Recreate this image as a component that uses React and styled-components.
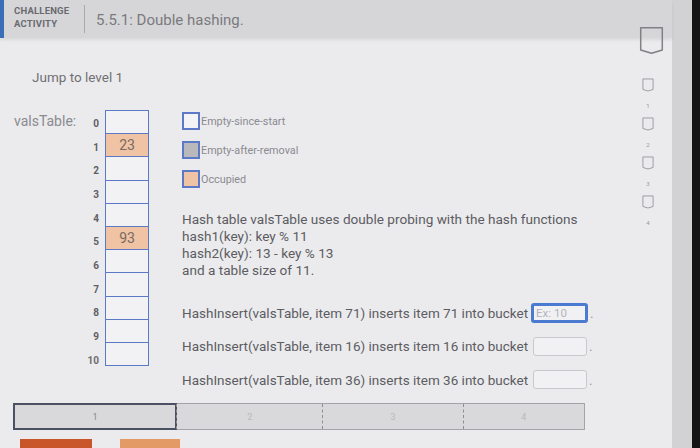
import React from 'react';
import styled, { createGlobalStyle } from 'styled-components';

const Global = createGlobalStyle`
  html, body {
    margin: 0;
    padding: 0;
    width: 700px;
    height: 448px;
    overflow: hidden;
    background: #e9e9ea;
    font-family: Roboto, "Liberation Sans", sans-serif;
  }
`;

const Screen = styled.div`
  display: flex;
  width: 700px;
  height: 448px;
  overflow: hidden;
`;

const Main = styled.div`
  flex: 1;
  display: flex;
  flex-direction: column;
  background: #ebebed;
`;

const EdgeStrip = styled.div`
  width: 20px;
  background: #d2d2d4;
`;

const Bezel = styled.div`
  width: 8px;
  background: #141414;
`;

const Header = styled.div`
  height: 38px;
  flex-shrink: 0;
  display: flex;
  align-items: flex-start;
  background: #d6d6d8;
  border-left: 4px solid #3a6fb8;
  box-shadow: 0 2px 3px rgba(0, 0, 0, 0.08);
  position: relative;
  z-index: 1;
`;

const Badge = styled.div`
  padding: 4px 0 0 10px;
  width: 70px;
  font-size: 9.5px;
  font-weight: 700;
  line-height: 13px;
  color: #6a6a70;
  letter-spacing: 0.2px;
`;

const Divider = styled.div`
  width: 1px;
  height: 28px;
  margin-top: 5px;
  background: #a9a9ad;
`;

const Title = styled.div`
  margin: 11px 0 0 11px;
  font-size: 15px;
  color: #7a7a7e;
`;

const BigShieldWrap = styled.div`
  margin: 24px 0 0 auto;
  padding-right: 6px;
  width: 28px;
  height: 34px;
`;

const Body = styled.div`
  flex: 1;
  display: flex;
`;

const Content = styled.div`
  flex: 1;
  display: flex;
  flex-direction: column;
  padding-left: 14px;
`;

const LevelColumn = styled.div`
  width: 48px;
  display: flex;
  flex-direction: column;
  align-items: center;
  padding-top: 40px;
  gap: 7px;
`;

const LevelItem = styled.div`
  display: flex;
  flex-direction: column;
  align-items: center;
  height: 32px;
  color: #9a9a9e;
  font-size: 6px;
  line-height: 8px;

  span {
    margin-top: 10px;
  }
`;

const JumpLink = styled.div`
  margin: 31px 0 0 18px;
  font-size: 13.5px;
  line-height: 16px;
  color: #707074;
`;

const Workspace = styled.div`
  display: flex;
  margin-top: 25px;
`;

const TableBlock = styled.div`
  display: flex;
  width: 168px;
  flex-shrink: 0;
`;

const TableName = styled.div`
  width: 72px;
  padding-top: 3px;
  font-size: 14px;
  color: #8a8a90;
`;

const IndexCol = styled.div`
  width: 19px;
  padding-top: 1.5px;
`;

const IndexLabel = styled.div`
  height: 23.7px;
  display: flex;
  align-items: center;
  justify-content: flex-end;
  padding-right: 6px;
  font-size: 10px;
  font-weight: 700;
  color: ${p => (p.$wide ? '#6c6c70' : '#5f5f64')};
`;

const CellCol = styled.div`
  width: 44px;
  border-bottom: 1.5px solid #5b79c6;
  align-self: flex-start;
`;

const Cell = styled.div`
  height: 22.2px;
  border: 1.5px solid #5b79c6;
  border-bottom: none;
  background: ${p => (p.$filled ? '#efc3a3' : '#f2f2f4')};
  display: flex;
  align-items: center;
  justify-content: center;
  font-size: 14px;
  color: #7a6a62;
`;

const Info = styled.div`
  display: flex;
  flex-direction: column;
`;

const Legend = styled.div`
  display: flex;
  flex-direction: column;
  gap: 11px;
  margin-top: 2px;
`;

const LegendRow = styled.div`
  display: flex;
  align-items: center;
  gap: 1px;
  height: 18px;
  font-size: 10.8px;
  color: #8a8a90;
`;

const Swatch = styled.div`
  width: 14px;
  height: 14px;
  border: 2px solid #5b79c6;
  background: ${p => p.$bg};
`;

const Description = styled.div`
  margin-top: 23px;
  font-size: 13.6px;
  line-height: 17px;
  color: #5c5c62;
`;

const Inserts = styled.div`
  display: flex;
  flex-direction: column;
  gap: 12.5px;
  margin-top: 23px;
`;

const InsertRow = styled.div`
  display: flex;
  align-items: center;
  height: 21px;
  font-size: 13.5px;
  color: #5c5c62;
  white-space: nowrap;
`;

const Answer = styled.div`
  margin-left: ${p => (p.$focused ? '3px' : '5px')};
  width: ${p => (p.$focused ? '49px' : '50px')};
  height: ${p => (p.$focused ? '14px' : '17px')};
  border: ${p => (p.$focused ? '3px solid #4a7bd0' : '1px solid #c9c9cd')};
  border-radius: 3px;
  background: #f1f1f3;
  font-size: 11.5px;
  color: #b0b4c0;
  display: flex;
  align-items: center;
  padding-left: 2px;
  box-sizing: content-box;
`;

const Period = styled.span`
  margin-left: 2px;
  color: #9a9a9e;
`;

const Progress = styled.div`
  display: flex;
  flex-shrink: 0;
  width: 570px;
  height: 25px;
  margin: 13px 0 0 -1px;
  border: 1px solid #a4a4a8;
  background: #d9d9db;
`;

const Segment = styled.div`
  width: ${p => p.$w}px;
  display: flex;
  align-items: center;
  justify-content: center;
  font-size: 9px;
  color: ${p => (p.$active ? '#88888c' : '#b8b8bc')};
  border-left: ${p => (p.$first ? 'none' : '1px dashed #8e8e92')};
  outline: ${p => (p.$active ? '2px solid #4b5163' : 'none')};
  outline-offset: -1px;
`;

const Buttons = styled.div`
  display: flex;
  flex-shrink: 0;
  gap: 28px;
  margin: 9px 0 0 6px;
`;

const Btn = styled.div`
  width: ${p => p.$w}px;
  height: 12px;
  background: ${p => p.$bg};
`;

const Shield = ({ w, h }) => (
  <svg width={w} height={h} viewBox="0 0 20 22" fill="none">
    <path
      d="M2 1.5 H18 V18 L10 20.5 L2 18 Z"
      stroke="#808085"
      strokeWidth="1.1"
      strokeLinejoin="round"
    />
  </svg>
);

const cells = ['', '23', '', '', '', '93', '', '', '', '', ''];

export default function App() {
  return (
    <Screen>
      <Global />
      <Main>
        <Header>
          <Badge>
            CHALLENGE
            <br />
            ACTIVITY
          </Badge>
          <Divider />
          <Title>5.5.1: Double hashing.</Title>
          <BigShieldWrap>
            <Shield w={27} h={33} />
          </BigShieldWrap>
        </Header>
        <Body>
          <Content>
            <JumpLink>Jump to level 1</JumpLink>
            <Workspace>
              <TableBlock>
                <TableName>valsTable:</TableName>
                <IndexCol>
                  {cells.map((_, i) => (
                    <IndexLabel key={i} $wide={i > 9}>{i}</IndexLabel>
                  ))}
                </IndexCol>
                <CellCol>
                  {cells.map((v, i) => (
                    <Cell key={i} $filled={!!v}>{v}</Cell>
                  ))}
                </CellCol>
              </TableBlock>
              <Info>
                <Legend>
                  <LegendRow><Swatch $bg="#f3f3f5" />Empty-since-start</LegendRow>
                  <LegendRow><Swatch $bg="#b9b9bc" />Empty-after-removal</LegendRow>
                  <LegendRow><Swatch $bg="#efc3a3" />Occupied</LegendRow>
                </Legend>
                <Description>
                  Hash table valsTable uses double probing with the hash functions
                  <br />
                  hash1(key): key % 11
                  <br />
                  hash2(key): 13 - key % 13
                  <br />
                  and a table size of 11.
                </Description>
                <Inserts>
                  <InsertRow>
                    HashInsert(valsTable, item 71) inserts item 71 into bucket
                    <Answer $focused>Ex: 10</Answer>
                    <Period>.</Period>
                  </InsertRow>
                  <InsertRow>
                    HashInsert(valsTable, item 16) inserts item 16 into bucket
                    <Answer />
                    <Period>.</Period>
                  </InsertRow>
                  <InsertRow>
                    HashInsert(valsTable, item 36) inserts item 36 into bucket
                    <Answer />
                    <Period>.</Period>
                  </InsertRow>
                </Inserts>
              </Info>
            </Workspace>
            <Progress>
              <Segment $w={163} $first $active>1</Segment>
              <Segment $w={146}>2</Segment>
              <Segment $w={140}>3</Segment>
              <Segment $w={121}>4</Segment>
            </Progress>
            <Buttons>
              <Btn $w={72} $bg="#c9552b" />
              <Btn $w={60} $bg="#e39a64" />
            </Buttons>
          </Content>
          <LevelColumn>
            {[1, 2, 3, 4].map(n => (
              <LevelItem key={n}>
                <Shield w={16} h={17} />
                <span>{n}</span>
              </LevelItem>
            ))}
          </LevelColumn>
        </Body>
      </Main>
      <EdgeStrip />
      <Bezel />
    </Screen>
  );
}
